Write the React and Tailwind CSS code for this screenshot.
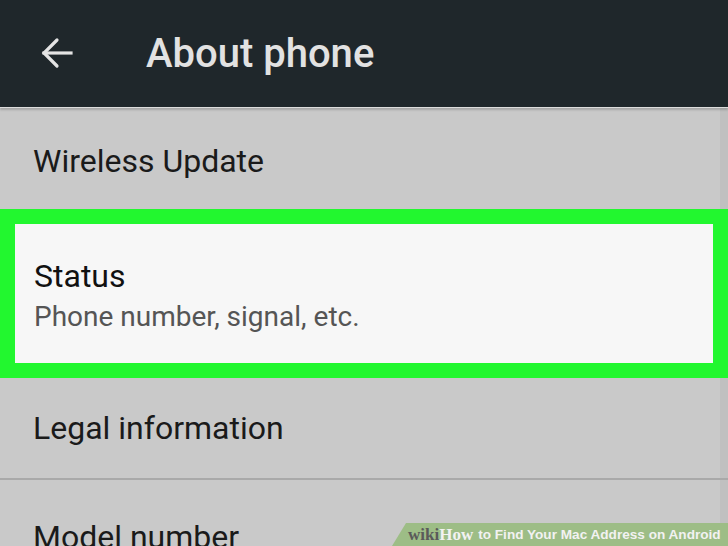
import React from 'react';

const rows = [
  { title: 'Legal information' },
];

const BackArrow = () => (
  <svg width="34" height="34" viewBox="0 0 34 34" fill="none" stroke="#e4e4e4" strokeWidth="3.2" strokeLinecap="square">
    <path d="M4 17 H31" />
    <path d="M17 4 L4 17 L17 30" strokeLinecap="round" strokeLinejoin="miter" />
  </svg>
);

const App = () => {
  return (
    <div className="relative w-[728px] h-[546px] overflow-hidden bg-[#c9c9c9] font-['Roboto',sans-serif]">
      {/* Toolbar */}
      <div className="h-[108px] bg-[#1f272b] flex items-center border-b border-[#dcdcdc] shadow-[0_2px_2px_rgba(0,0,0,0.18)] relative z-10">
        <div className="ml-[40px] -mt-[2px] w-[34px] flex items-center">
          <BackArrow />
        </div>
        <h1 className="ml-[72px] text-[40px] font-medium text-[#e2e2e2] leading-none">
          About phone
        </h1>
      </div>

      {/* Wireless Update */}
      <div className="h-[101px] flex items-center pl-[33px] pt-[5px] border-r-8 border-[#c0c0c0]">
        <span className="text-[32px] text-[#1a1a1a] leading-none">Wireless Update</span>
      </div>

      {/* Highlighted Status row */}
      <div className="h-[169px] border-[15px] border-[#22f72f] bg-[#f7f7f7] flex flex-col justify-center pl-[19px] pt-[3px]">
        <span className="text-[32px] text-[#111] leading-none">Status</span>
        <span className="mt-[11px] text-[28px] text-[#555] leading-none">Phone number, signal, etc.</span>
      </div>

      {rows.map((r) => (
        <div key={r.title} className="h-[102px] flex border-b-2 border-[#a9a9a9]">
          <div className="flex-1 flex items-center pl-[33px]">
            <span className="text-[32px] text-[#1a1a1a] leading-none">{r.title}</span>
          </div>
          <div className="w-[8px] bg-[#c0c0c0]" />
        </div>
      ))}

      {/* Model number, cut off at the bottom */}
      <div className="flex h-[70px]">
        <div className="flex-1 pt-[41px] pl-[33px]">
          <span className="text-[32px] text-[#1a1a1a] leading-none">Model number</span>
        </div>
        <div className="w-[8px] bg-[#c0c0c0]" />
      </div>

      {/* Watermark */}
      <div className="absolute right-0 bottom-0 w-[336px] h-[23px] bg-[#9dbd86] [clip-path:polygon(14px_0,100%_0,100%_100%,0_100%)] flex items-center pl-[16px] whitespace-nowrap">
        <span className="font-['Liberation_Serif',serif] font-bold text-[17px] text-[#5a5a5a] leading-none">wiki</span>
        <span className="font-['Liberation_Serif',serif] font-bold text-[17px] text-[#f2f2f2] leading-none">How</span>
        <span className="ml-[5px] font-['Liberation_Sans',sans-serif] font-bold text-[13.6px] text-[#f2f2f2] leading-none">to Find Your Mac Address on Android</span>
      </div>
    </div>
  );
};

export default App;
